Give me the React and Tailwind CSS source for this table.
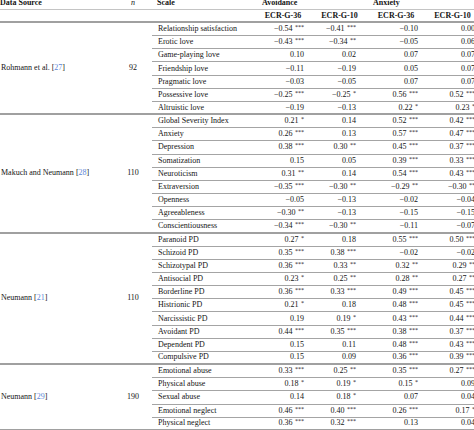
import React from "react";

const M = "\u2212";

const groups = [
  {
    src: "Rohmann et al.",
    ref: "27",
    n: "92",
    rows: [
      ["Relationship satisfaction", [M + "0.54", "***"], [M + "0.41", "***"], [M + "0.10", ""], ["0.00", ""]],
      ["Erotic love", [M + "0.43", "***"], [M + "0.34", "**"], [M + "0.05", ""], ["0.06", ""]],
      ["Game-playing love", ["0.10", ""], ["0.02", ""], ["0.07", ""], ["0.07", ""]],
      ["Friendship love", [M + "0.11", ""], [M + "0.19", ""], ["0.05", ""], ["0.07", ""]],
      ["Pragmatic love", [M + "0.03", ""], [M + "0.05", ""], ["0.07", ""], ["0.07", ""]],
      ["Possessive love", [M + "0.25", "***"], [M + "0.25", "*"], ["0.56", "***"], ["0.52", "***"]],
      ["Altruistic love", [M + "0.19", ""], [M + "0.13", ""], ["0.22", "*"], ["0.23", "*"]],
    ],
  },
  {
    src: "Makuch and Neumann",
    ref: "28",
    n: "110",
    rows: [
      ["Global Severity Index", ["0.21", "*"], ["0.14", ""], ["0.52", "***"], ["0.42", "***"]],
      ["Anxiety", ["0.26", "***"], ["0.13", ""], ["0.57", "***"], ["0.47", "***"]],
      ["Depression", ["0.38", "***"], ["0.30", "**"], ["0.45", "***"], ["0.37", "***"]],
      ["Somatization", ["0.15", ""], ["0.05", ""], ["0.39", "***"], ["0.33", "***"]],
      ["Neuroticism", ["0.31", "**"], ["0.14", ""], ["0.54", "***"], ["0.43", "***"]],
      ["Extraversion", [M + "0.35", "***"], [M + "0.30", "**"], [M + "0.29", "**"], [M + "0.30", "**"]],
      ["Openness", [M + "0.05", ""], [M + "0.13", ""], [M + "0.02", ""], [M + "0.04", ""]],
      ["Agreeableness", [M + "0.30", "**"], [M + "0.13", ""], [M + "0.15", ""], [M + "0.15", ""]],
      ["Conscientiousness", [M + "0.34", "***"], [M + "0.30", "**"], [M + "0.11", ""], [M + "0.07", ""]],
    ],
  },
  {
    src: "Neumann",
    ref: "21",
    n: "110",
    rows: [
      ["Paranoid PD", ["0.27", "*"], ["0.18", ""], ["0.55", "***"], ["0.50", "***"]],
      ["Schizoid PD", ["0.35", "***"], ["0.38", "***"], [M + "0.02", ""], [M + "0.02", ""]],
      ["Schizotypal PD", ["0.36", "***"], ["0.33", "**"], ["0.32", "**"], ["0.29", "**"]],
      ["Antisocial PD", ["0.23", "*"], ["0.25", "**"], ["0.28", "**"], ["0.27", "**"]],
      ["Borderline PD", ["0.36", "***"], ["0.33", "***"], ["0.49", "***"], ["0.45", "***"]],
      ["Histrionic PD", ["0.21", "*"], ["0.18", ""], ["0.48", "***"], ["0.45", "***"]],
      ["Narcissistic PD", ["0.19", ""], ["0.19", "*"], ["0.43", "***"], ["0.44", "***"]],
      ["Avoidant PD", ["0.44", "***"], ["0.35", "***"], ["0.38", "***"], ["0.37", "***"]],
      ["Dependent PD", ["0.15", ""], ["0.11", ""], ["0.48", "***"], ["0.43", "***"]],
      ["Compulsive PD", ["0.15", ""], ["0.09", ""], ["0.36", "***"], ["0.39", "***"]],
    ],
  },
  {
    src: "Neumann",
    ref: "29",
    n: "190",
    rows: [
      ["Emotional abuse", ["0.33", "***"], ["0.25", "**"], ["0.35", "***"], ["0.27", "***"]],
      ["Physical abuse", ["0.18", "*"], ["0.19", "*"], ["0.15", "*"], ["0.09", ""]],
      ["Sexual abuse", ["0.14", ""], ["0.18", "*"], ["0.07", ""], ["0.04", ""]],
      ["Emotional neglect", ["0.46", "***"], ["0.40", "***"], ["0.26", "***"], ["0.17", "*"]],
      ["Physical neglect", ["0.36", "***"], ["0.32", "***"], ["0.13", ""], ["0.04", ""]],
    ],
  },
];

function Num({ v, cls }) {
  return (
    <div className={"flex items-center justify-end whitespace-nowrap " + cls}>
      <span>{v[0]}</span>
      {v[1] ? (
        <span className="ml-[2.5px] text-[6px] leading-none relative top-[-2px]">{v[1]}</span>
      ) : null}
    </div>
  );
}

function Row({ r, last }) {
  return (
    <div
      className={
        "grid grid-cols-[103px_56px_57px_56px_57px] items-center " +
        (last ? "h-[11.17px]" : "h-[13.17px] border-b border-[#a4a4a4]")
      }
    >
      <div className="pl-[6px] whitespace-nowrap">{r[0]}</div>
      <Num v={r[1]} cls="pr-[7px]" />
      <Num v={r[2]} cls="pr-[12px]" />
      <Num v={r[3]} cls="pr-[6px]" />
      <Num v={r[4]} cls="pr-[6px]" />
    </div>
  );
}

export default function App() {
  return (
    <div className="w-[474px] h-[430px] overflow-hidden bg-white">
      <div
        className="w-[482px] -mt-[3px] text-[8px] leading-none text-[#141414]"
        style={{ fontFamily: '"Liberation Serif", "Times New Roman", serif' }}
      >
        <div className="grid grid-cols-[114px_38px_103px_56px_57px_56px_57px] items-center h-[13px] border-b border-[#c4c4c4] font-bold">
          <div className="pl-0 whitespace-nowrap">Data Source</div>
          <div className="text-center italic font-normal">n</div>
          <div className="pl-[5px]">Scale</div>
          <div className="pl-[7px] whitespace-nowrap">Avoidance</div>
          <div></div>
          <div className="pl-[5px] whitespace-nowrap">Anxiety</div>
          <div></div>
        </div>
        <div className="grid grid-cols-[114px_38px_103px_56px_57px_56px_57px] items-center h-[13px] border-b-2 border-[#a0a0a0] font-bold">
          <div></div>
          <div></div>
          <div></div>
          <div className="text-center">ECR-G-36</div>
          <div className="text-center">ECR-G-10</div>
          <div className="text-center">ECR-G-36</div>
          <div className="text-center">ECR-G-10</div>
        </div>
        {groups.map((g, gi) => (
          <div key={gi} className="flex border-b-2 border-[#a0a0a0]">
            <div className="w-[152px] flex items-center">
              <div className="w-[114px] pl-[1px] whitespace-nowrap">
                {g.src} [<span className="text-[#5b86d6]">{g.ref}</span>]
              </div>
              <div className="w-[38px] text-center">{g.n}</div>
            </div>
            <div className="flex flex-col">
              {g.rows.map((r, ri) => (
                <Row key={ri} r={r} last={ri === g.rows.length - 1} />
              ))}
            </div>
          </div>
        ))}
      </div>
    </div>
  );
}
